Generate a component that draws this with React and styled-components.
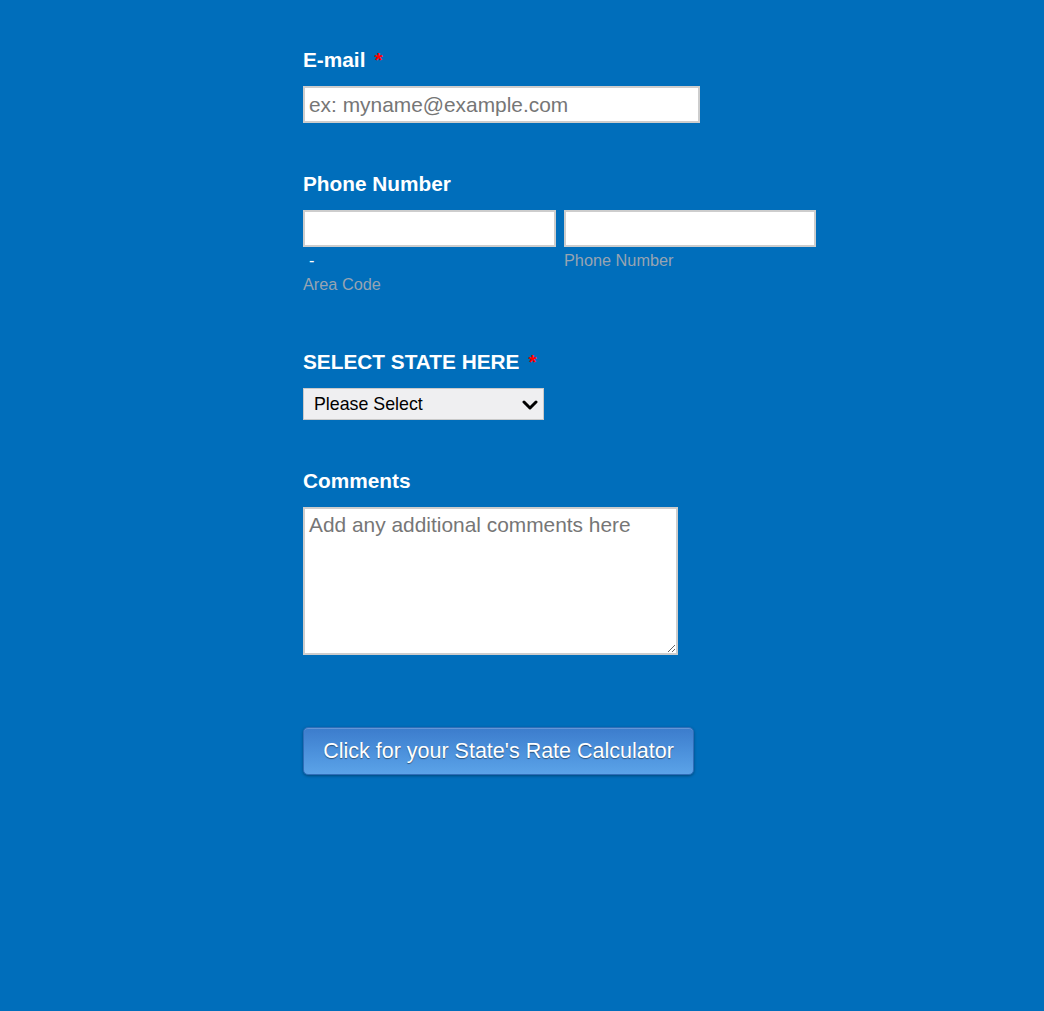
import React from "react";
import styled, { createGlobalStyle } from "styled-components";

const Global = createGlobalStyle`
  html, body { margin: 0; padding: 0; background: #006ebb; }
  body { font-family: "Liberation Sans", Arial, sans-serif; }
  * { box-sizing: border-box; }
`;

const Page = styled.div`
  min-height: 1011px;
  background: #006ebb;
  padding: 48px 0 0 303px;
`;

const Field = styled.div`
  display: flex;
  flex-direction: column;
  align-items: flex-start;
  margin-top: ${(p) => p.$gap || 0}px;
`;

const Label = styled.label`
  font-size: 20.8px;
  line-height: 24px;
  font-weight: bold;
  color: #ffffff;
  margin-bottom: 14px;
`;

const Req = styled.span`
  color: #ff0000;
  margin-left: 9px;
  font-weight: bold;
`;

const TextInput = styled.input`
  width: ${(p) => p.$w}px;
  height: 37px;
  border: 2px solid #cdcdcd;
  background: #ffffff;
  padding: 0 4px;
  font-family: "Liberation Sans", Arial, sans-serif;
  font-size: 20.9px;
  color: #333;
  outline: none;
  &::placeholder { color: #767676; }
`;

const PhoneRow = styled.div`
  display: flex;
  gap: 8px;
  align-items: flex-start;
`;

const PhoneCol = styled.div`
  display: flex;
  flex-direction: column;
`;

const SubText = styled.div`
  display: flex;
  flex-direction: column;
  margin-top: 1px;
`;

const Dash = styled.span`
  font-size: 16.3px;
  line-height: 24px;
  color: #ffffff;
  padding-left: 6px;
`;

const SubLabel = styled.span`
  font-size: 16.3px;
  line-height: 24px;
  color: #97a4b2;
`;

const SelectWrap = styled.div`
  position: relative;
  width: 241px;
  height: 32px;
`;

const Select = styled.select`
  appearance: none;
  -webkit-appearance: none;
  width: 100%;
  height: 100%;
  border: 1px solid #c9c9c9;
  background: #efeff1;
  padding: 0 0 0 10px;
  font-family: "Liberation Sans", Arial, sans-serif;
  font-size: 17.8px;
  color: #000;
  outline: none;
`;

const Chevron = styled.svg`
  position: absolute;
  right: 6px;
  top: 12px;
  pointer-events: none;
`;

const TextArea = styled.textarea`
  width: 375px;
  height: 148px;
  border: 2px solid #cdcdcd;
  background: #ffffff;
  padding: 4px 4px;
  font-family: "Liberation Sans", Arial, sans-serif;
  font-size: 20.9px;
  line-height: 24px;
  color: #333;
  outline: none;
  resize: both;
  &::placeholder { color: #767676; }
`;

const Button = styled.button`
  margin-top: 72px;
  width: 391px;
  height: 48px;
  border: 1px solid #2f6db8;
  border-radius: 5px;
  background: linear-gradient(to bottom, #3c7ccc 0%, #4b90db 50%, #5ba3e8 100%);
  color: #ffffff;
  font-family: "Liberation Sans", Arial, sans-serif;
  font-size: 21.5px;
  text-shadow: 0 1px 1px rgba(0, 0, 0, 0.45);
  box-shadow: 0 1px 3px rgba(0, 0, 0, 0.35), inset 0 1px 0 rgba(255, 255, 255, 0.2);
  cursor: pointer;
  padding: 0;
`;

export default function App() {
  return (
    <>
      <Global />
      <Page>
        <Field>
          <Label>
            E-mail<Req>*</Req>
          </Label>
          <TextInput $w={397} type="email" placeholder="ex: myname@example.com" />
        </Field>

        <Field $gap={49}>
          <Label>Phone Number</Label>
          <PhoneRow>
            <PhoneCol>
              <TextInput $w={253} type="tel" />
              <SubText>
                <Dash>-</Dash>
                <SubLabel>Area Code</SubLabel>
              </SubText>
            </PhoneCol>
            <PhoneCol>
              <TextInput $w={252} type="tel" />
              <SubText>
                <SubLabel>Phone Number</SubLabel>
              </SubText>
            </PhoneCol>
          </PhoneRow>
        </Field>

        <Field $gap={54}>
          <Label>
            SELECT STATE HERE<Req>*</Req>
          </Label>
          <SelectWrap>
            <Select defaultValue="">
              <option value="">Please Select</option>
            </Select>
            <Chevron width="16" height="10" viewBox="0 0 16 10">
              <polyline
                points="2,2 8,8 14,2"
                fill="none"
                stroke="#000"
                strokeWidth="3"
                strokeLinecap="round"
                strokeLinejoin="round"
              />
            </Chevron>
          </SelectWrap>
        </Field>

        <Field $gap={49}>
          <Label>Comments</Label>
          <TextArea placeholder="Add any additional comments here" />
        </Field>

        <Field>
          <Button type="button">Click for your State's Rate Calculator</Button>
        </Field>
      </Page>
    </>
  );
}
